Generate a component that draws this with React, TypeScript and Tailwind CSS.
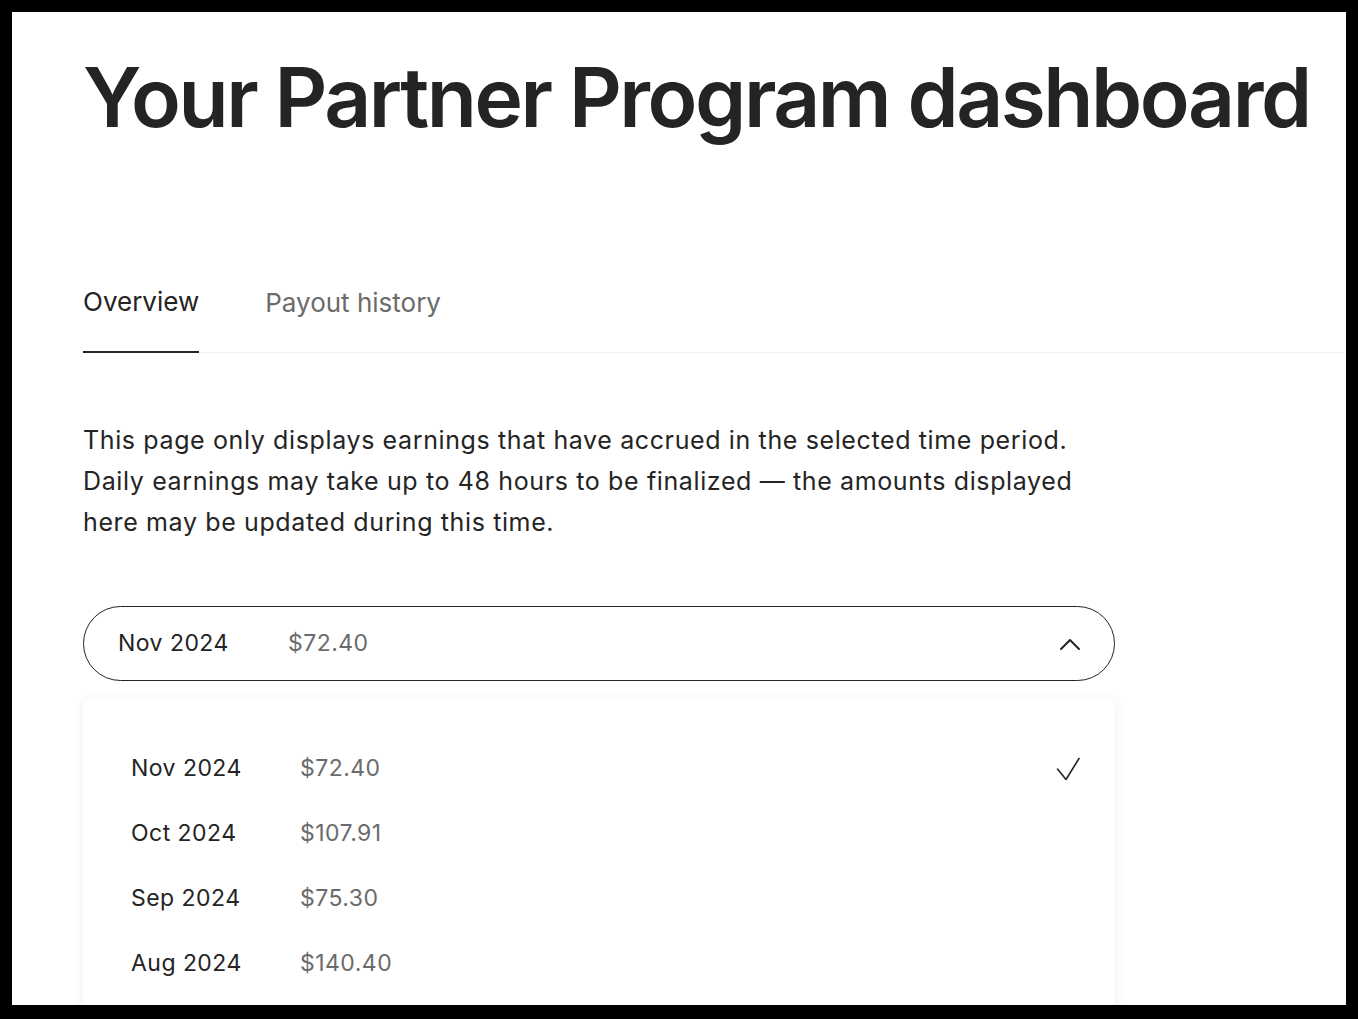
const months = [
  { label: 'Nov 2024', amount: '$72.40', selected: true },
  { label: 'Oct 2024', amount: '$107.91' },
  { label: 'Sep 2024', amount: '$75.30' },
  { label: 'Aug 2024', amount: '$140.40' },
];

function CheckMark() {
  return (
    <svg width="24" height="24" viewBox="0 0 24 24" fill="none" aria-hidden="true">
      <path d="M1.5 12 L10 22.5 L23 1.5" stroke="#242424" strokeWidth="1.6" strokeLinecap="round" strokeLinejoin="round" />
    </svg>
  );
}

function Chevron() {
  return (
    <svg width="22" height="14" viewBox="0 0 22 14" fill="none" aria-hidden="true">
      <path d="M2 12 L11 3 L20 12" stroke="#242424" strokeWidth="2" strokeLinecap="round" strokeLinejoin="round" />
    </svg>
  );
}

export default function App() {
  return (
    <div className="bg-black pt-3 px-3 pb-[14px] font-['Inter',sans-serif] text-[#242424]">
      <div className="bg-white h-[993px] overflow-hidden pl-[71px]">
        {/* Heading */}
        <h1 className="mt-[45px] text-[82px] leading-none font-semibold tracking-[-0.03em] whitespace-nowrap">
          Your Partner Program dashboard
        </h1>

        {/* Tabs */}
        <div role="tablist" className="mt-[147px] flex gap-[66px] border-b border-[#f2f2f2]">
          <button
            role="tab"
            aria-selected="true"
            className="pb-[33px] -mb-px border-b-2 border-[#242424] text-[26px] leading-[32px] text-[#242424]"
          >
            Overview
          </button>
          <button role="tab" className="pb-[33px] text-[26px] leading-[32px] text-[#6b6b6b]">
            Payout history
          </button>
        </div>

        <div className="w-[1032px]">
          <p className="mt-[67px] text-[25px] leading-[41px] tracking-[0.025em] text-[#242424] whitespace-nowrap">
            This page only displays earnings that have accrued in the selected time period.
            <br />
            Daily earnings may take up to 48 hours to be finalized — the amounts displayed
            <br />
            here may be updated during this time.
          </p>

          {/* Month select */}
          <button className="mt-[63px] w-full h-[75px] rounded-full border-[1.5px] border-[#242424] flex items-center pl-[34px] pr-[33px] text-[23px] tracking-[0.02em]">
            <span className="w-[170px] text-left">Nov 2024</span>
            <span className="text-[#6b6b6b]">$72.40</span>
            <span className="ml-auto">
              <Chevron />
            </span>
          </button>

          <ul className="mt-[18px] rounded-md bg-white shadow-[0_2px_12px_rgba(0,0,0,0.08)] pt-[37px] pb-[24px] pl-[48px] pr-[35px]">
            {months.map((m) => (
              <li key={m.label} className="h-[65px] flex items-center text-[23px] tracking-[0.02em]">
                <span className="w-[169px]">{m.label}</span>
                <span className="text-[#6b6b6b]">{m.amount}</span>
                {m.selected && (
                  <span className="ml-auto">
                    <CheckMark />
                  </span>
                )}
              </li>
            ))}
          </ul>
        </div>
      </div>
    </div>
  );
}
